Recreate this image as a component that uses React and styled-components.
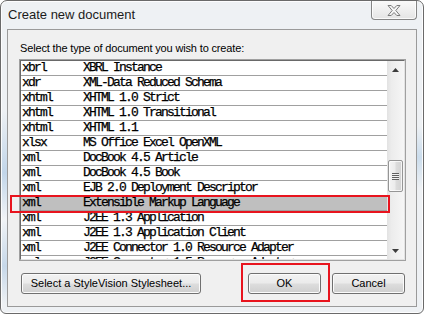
import React from "react";
import styled, { createGlobalStyle } from "styled-components";

const Global = createGlobalStyle`
  html, body { margin: 0; padding: 0; background: #ffffff; }
  * { box-sizing: border-box; }
`;

const Window = styled.div`
  position: relative;
  width: 424px;
  height: 314px;
  display: flex;
  flex-direction: column;
  border: 1px solid #6a6a6a;
  border-radius: 7px 7px 6px 6px;
  background-color: #eef1f4;
  background-image:
    linear-gradient(to bottom, rgba(255,255,255,0) 35%, rgba(140,180,220,0.45) 55%, rgba(255,255,255,0.2) 70%, rgba(150,185,220,0.45) 85%, rgba(255,255,255,0) 97%),
    linear-gradient(to bottom, rgba(255,255,255,0) 40%, rgba(150,190,225,0.4) 50%, rgba(255,255,255,0) 60%);
  background-size: 6px 100%, 6px 100%;
  background-position: left top, right top;
  background-repeat: no-repeat;
  box-shadow: inset 0 0 0 1px rgba(255,255,255,0.85);
  overflow: hidden;
  font-family: "Liberation Sans", Arial, sans-serif;
`;

const TitleBar = styled.div`
  height: 28px;
  display: flex;
  align-items: flex-start;
  flex: none;
`;

const Title = styled.div`
  margin: 6px 0 0 7px;
  font-size: 13px;
  line-height: 16px;
  color: #1b1b1b;
`;

const CloseButton = styled.div`
  margin: -1px 6px 0 auto;
  width: 46px;
  height: 20px;
  display: flex;
  align-items: center;
  justify-content: center;
  border: 1px solid #858585;
  border-top: none;
  border-radius: 0 0 4px 4px;
  background: linear-gradient(#fbfbfb, #f0f0f0 50%, #e4e4e4);
  box-shadow: inset 0 0 0 1px rgba(255,255,255,0.8);
  padding-top: 1px;
`;

const Client = styled.div`
  flex: none;
  height: 278px;
  margin: 0 6px 6px 6px;
  border: 1px solid #9a9a9a;
  background: #f0f0f0;
  display: flex;
  flex-direction: column;
`;

const Label = styled.div`
  margin: 11px 0 0 12px;
  height: 14px;
  line-height: 14px;
  font-size: 11px;
  letter-spacing: -0.15px;
  color: #000;
`;

const ListBox = styled.div`
  margin: 4px 0 0 11px;
  width: 387px;
  height: 202px;
  border: 1px solid #a0a0a0;
  flex: none;
`;

const ListInner = styled.div`
  height: 100%;
  display: flex;
  background: #fff;
  border-top: 1px solid #696969;
  border-left: 1px solid #696969;
  border-right: 1px solid #e3e3e3;
  border-bottom: 1px solid #e3e3e3;
  overflow: hidden;
`;

const Rows = styled.div`
  flex: 1;
  display: flex;
  flex-direction: column;
  overflow: hidden;
`;

const Row = styled.div`
  flex: none;
  height: 15px;
  display: flex;
  align-items: center;
  border-bottom: 1px solid #a0a0a0;
  background: ${(p) => (p.$selected ? "#bfbfbf" : "#ffffff")};
  font-family: "Liberation Mono", "Courier New", monospace;
  font-size: 13px;
  letter-spacing: -1.8px;
  -webkit-text-stroke: 0.25px #000;
  color: #000;
  white-space: nowrap;
  line-height: 14px;
`;

const Ext = styled.span`
  width: 62px;
  padding-left: 1px;
  flex: none;
`;

const Desc = styled.span`
  flex: none;
`;

const ScrollBar = styled.div`
  width: 17px;
  flex: none;
  display: flex;
  flex-direction: column;
  background: linear-gradient(to right, #e2e2e2, #ececec 25%, #f2f2f2 70%, #f6f6f6);
`;

const ArrowButton = styled.div`
  height: 17px;
  flex: none;
  display: flex;
  align-items: center;
  justify-content: center;
`;

const Track = styled.div`
  flex: 1;
  display: flex;
  flex-direction: column;
`;

const Thumb = styled.div`
  margin: ${(p) => p.$offset}px 1px 0 1px;
  height: 32px;
  border: 1px solid #959595;
  border-radius: 2px;
  background: linear-gradient(to right, #f4f4f4, #ececec 45%, #dcdcdc 55%, #d2d2d2);
  box-shadow: inset 0 0 0 1px rgba(255,255,255,0.75);
  display: flex;
  align-items: center;
  justify-content: center;
`;

const Grip = styled.div`
  width: 7px;
  height: 7px;
  background: repeating-linear-gradient(to bottom, #5f5f5f 0, #5f5f5f 1px, #f0f0f0 1px, #f0f0f0 2px);
`;

const ButtonRow = styled.div`
  margin: 12px 11px 0 13px;
  display: flex;
  align-items: center;
`;

const Button = styled.div`
  width: ${(p) => p.$w}px;
  height: 21px;
  margin-left: ${(p) => (p.$push ? "auto" : p.$gap ? `${p.$gap}px` : "0")};
  display: flex;
  align-items: center;
  justify-content: center;
  border: 1px solid #707070;
  border-radius: 3px;
  background: linear-gradient(#f2f2f2 0%, #ebebeb 48%, #dddddd 52%, #cfcfcf 100%);
  box-shadow: inset 0 0 0 1px #fbfbfb;
  font-size: 11px;
  color: #000;
  line-height: 13px;
`;

const Highlight = styled.div`
  position: absolute;
  left: ${(p) => p.$x}px;
  top: ${(p) => p.$y}px;
  width: ${(p) => p.$w}px;
  height: ${(p) => p.$h}px;
  border: 2px solid #e8141e;
  pointer-events: none;
`;

const rows = [
  ["xbrl", "XBRL Instance"],
  ["xdr", "XML-Data Reduced Schema"],
  ["xhtml", "XHTML 1.0 Strict"],
  ["xhtml", "XHTML 1.0 Transitional"],
  ["xhtml", "XHTML 1.1"],
  ["xlsx", "MS Office Excel OpenXML"],
  ["xml", "DocBook 4.5 Article"],
  ["xml", "DocBook 4.5 Book"],
  ["xml", "EJB 2.0 Deployment Descriptor"],
  ["xml", "Extensible Markup Language", true],
  ["xml", "J2EE 1.3 Application"],
  ["xml", "J2EE 1.3 Application Client"],
  ["xml", "J2EE Connector 1.0 Resource Adapter"],
  ["xml", "J2EE Connector 1.5 Resource Adapter"],
];

const CloseIcon = () => (
  <svg width="14" height="11" viewBox="0 0 14 11">
    <polygon
      points="1,0.5 4.2,0.5 7,3.5 9.8,0.5 13,0.5 8.8,5.5 13,10.5 9.8,10.5 7,7.5 4.2,10.5 1,10.5 5.2,5.5"
      fill="#f7f7f7"
      stroke="#7c7c7c"
      strokeWidth="1"
      strokeLinejoin="round"
    />
  </svg>
);

const UpArrow = () => (
  <svg width="7" height="4" viewBox="0 0 7 4">
    <polygon points="3.5,0 7,4 0,4" fill="#3c3c3c" />
  </svg>
);

const DownArrow = () => (
  <svg width="7" height="4" viewBox="0 0 7 4">
    <polygon points="0,0 7,0 3.5,4" fill="#3c3c3c" />
  </svg>
);

export default function App() {
  return (
    <>
      <Global />
      <Window>
        <TitleBar>
          <Title>Create new document</Title>
          <CloseButton>
            <CloseIcon />
          </CloseButton>
        </TitleBar>
        <Client>
          <Label>Select the type of document you wish to create:</Label>
          <ListBox>
            <ListInner>
              <Rows>
                {rows.map(([ext, desc, sel], i) => (
                  <Row key={i} $selected={!!sel}>
                    <Ext>{ext}</Ext>
                    <Desc>{desc}</Desc>
                  </Row>
                ))}
              </Rows>
              <ScrollBar>
                <ArrowButton>
                  <UpArrow />
                </ArrowButton>
                <Track>
                  <Thumb $offset={82}>
                    <Grip />
                  </Thumb>
                </Track>
                <ArrowButton>
                  <DownArrow />
                </ArrowButton>
              </ScrollBar>
            </ListInner>
          </ListBox>
          <ButtonRow>
            <Button $w={180}>Select a StyleVision Stylesheet...</Button>
            <Button $w={73} $push>OK</Button>
            <Button $w={73} $gap={11}>Cancel</Button>
          </ButtonRow>
        </Client>
        <Highlight $x={9} $y={194} $w={380} $h={18} />
        <Highlight $x={240} $y={262} $w={89} $h={39} />
      </Window>
    </>
  );
}
